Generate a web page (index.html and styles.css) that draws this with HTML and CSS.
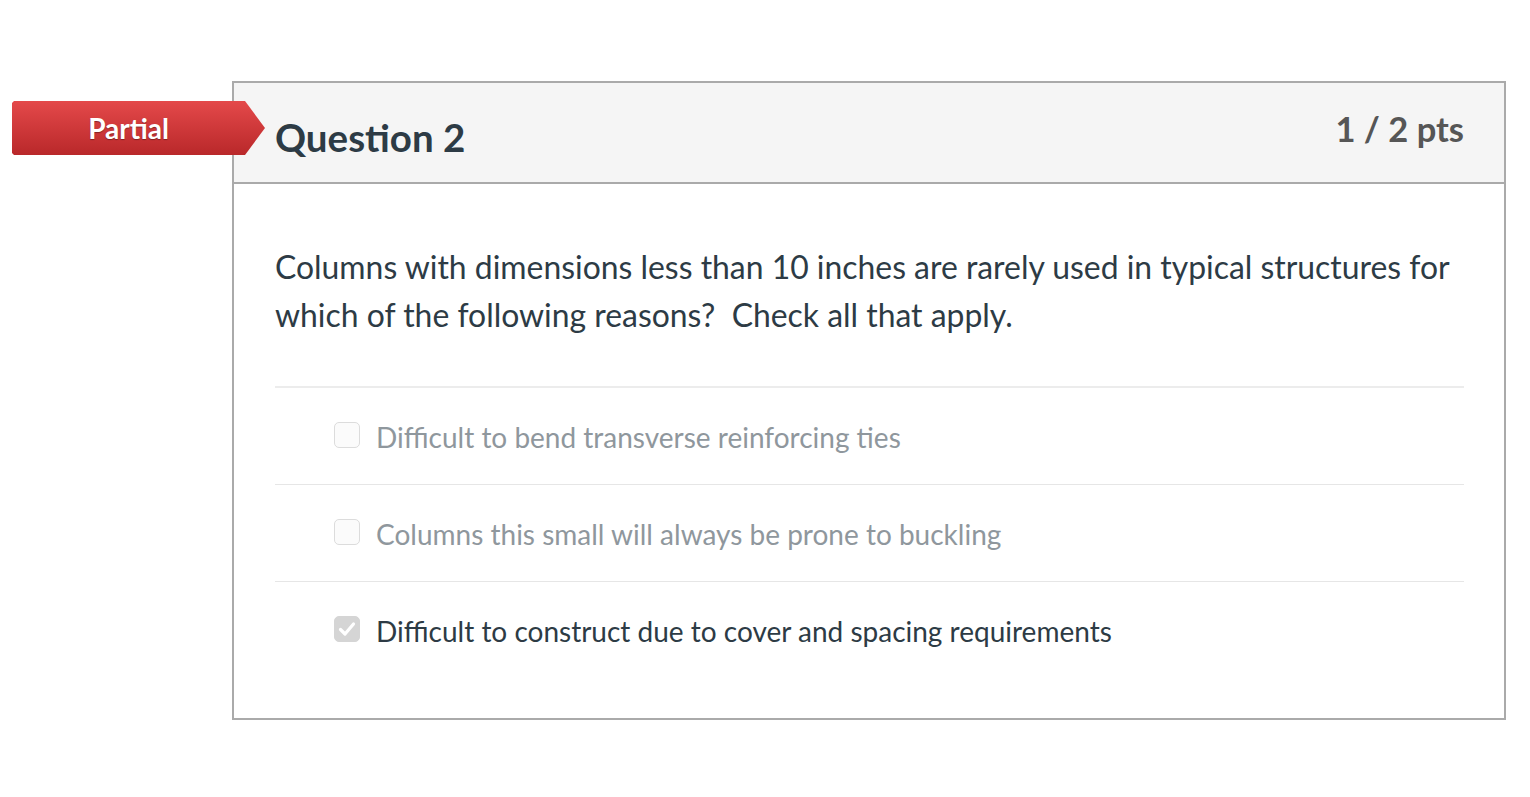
FILE: index.html
```html
<!DOCTYPE html>
<html>
<head>
<meta charset="utf-8">
<link rel="stylesheet" href="styles.css">
</head>
<body>
<div class="page">
  <div class="card">
    <div class="badge">Partial</div>
    <div class="header">
      <div class="qtitle">Question 2</div>
      <div class="pts">1 / 2 pts</div>
    </div>
    <div class="body">
      <p class="qtext">Columns with dimensions less than 10 inches are rarely used in typical structures for which of the following reasons?&nbsp; Check all that apply.</p>
      <div class="answers">
        <div class="answer">
          <span class="box"></span>
          <span class="atext muted">Difficult to bend transverse reinforcing ties</span>
        </div>
        <div class="answer">
          <span class="box"></span>
          <span class="atext muted">Columns this small will always be prone to buckling</span>
        </div>
        <div class="answer">
          <span class="box checked"><svg viewBox="0 0 26 26" width="26" height="26"><path d="M6.5 13.5 L11 18 L19.5 8" fill="none" stroke="#fff" stroke-width="3.2" stroke-linecap="round" stroke-linejoin="round"/></svg></span>
          <span class="atext">Difficult to construct due to cover and spacing requirements</span>
        </div>
      </div>
    </div>
  </div>
</div>
</body>
</html>
```
FILE: styles.css
```css
html, body {
  margin: 0;
  padding: 0;
  background: #fff;
  font-family: Lato, "Noto Sans", sans-serif;
  color: #2d3b45;
}
.page {
  padding-top: 81px;
  padding-left: 232px;
}
.card {
  position: relative;
  width: 1270px;
  border: 2px solid #aaaaaa;
  box-sizing: content-box;
}
.badge {
  position: absolute;
  left: -222px;
  top: 18px;
  width: 233px;
  height: 54px;
  padding-right: 20px;
  box-sizing: content-box;
  background: linear-gradient(#e4494a, #b9282a);
  clip-path: polygon(0 2px, 2px 0, 233px 0, 253px 27px, 233px 54px, 2px 54px, 0 52px);
  color: #fff;
  font-size: 28px;
  font-weight: 700;
  line-height: 54px;
  text-align: center;
  text-indent: 0;
  text-shadow: 0 1px 1px rgba(0,0,0,0.35);
}
.header {
  height: 99px;
  background: #f5f5f5;
  border-bottom: 2px solid #aaaaaa;
  display: flex;
  justify-content: space-between;
  padding: 0 40px 0 41px;
}
.qtitle {
  font-size: 38.5px;
  font-weight: 700;
  padding-top: 33px;
  line-height: 42px;
  color: #2d3b45;
}
.pts {
  font-size: 34.5px;
  font-weight: 700;
  color: #565656;
  padding-top: 26px;
  line-height: 40px;
}
.body {
  padding: 59px 40px 40px 41px;
}
.qtext {
  margin: 0 0 47px;
  font-size: 31.9px;
  line-height: 48px;
  color: #2d3b45;
}
.answer {
  border-top: 1px solid #e6e6e6;
  height: 96px;
  display: flex;
  align-items: center;
  padding-left: 59px;
}
.answer:first-child {
  border-top: 2px solid #ececec;
}
.box {
  width: 24px;
  height: 24px;
  border: 1px solid #dcdcdc;
  border-radius: 5px;
  background: #fbfbfb;
  margin-right: 16px;
  margin-top: -2px;
  display: flex;
  align-items: center;
  justify-content: center;
  overflow: hidden;
}
.box.checked {
  background: #d5d5d5;
  border-color: #d5d5d5;
}
.box svg {
  flex: none;
}
.atext {
  font-size: 28px;
  line-height: 36px;
  margin-top: 2px;
  color: #2d3b45;
}
.atext.muted {
  color: #8f979d;
}
```
